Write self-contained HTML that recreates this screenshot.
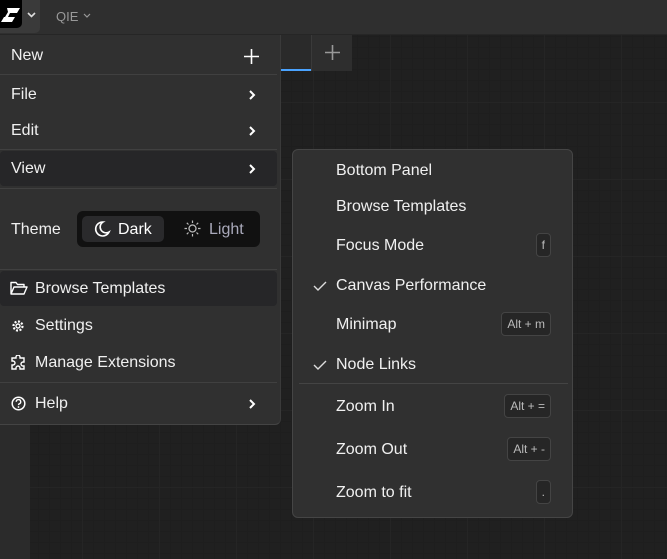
<!DOCTYPE html>
<html><head><meta charset="utf-8"><style>
*{box-sizing:border-box;margin:0;padding:0}
body{width:667px;height:559px;overflow:hidden;background:#202020;font-family:"Liberation Sans",sans-serif;position:relative;color:#e8e8e8}
.top{position:absolute;left:0;top:0;width:667px;height:35px;background:#2f2f2f;border-bottom:1px solid #262626}
.logobox{position:absolute;left:0;top:0;width:40px;height:33px;background:#3a3a3a;border-radius:0 0 5px 0}
.logo{position:absolute;left:0;top:0;width:22px;height:28px;background:#000;border-radius:0 0 5px 0}
.side{position:absolute;left:0;top:35px;width:30px;height:524px;background:#2b2b2b}
.canvas{position:absolute;left:30px;top:35px;right:0;bottom:0;
background-image:linear-gradient(#252525 1px,transparent 1px),linear-gradient(90deg,#252525 1px,transparent 1px),linear-gradient(#1e1e1e 1px,transparent 1px),linear-gradient(90deg,#1e1e1e 1px,transparent 1px);
background-size:77px 77px,77px 77px,11px 11px,11px 11px;background-position:-25px -10px}
.tab1{position:absolute;left:281px;top:35px;width:30px;height:36px;background:#2a2a2a;border-bottom:2px solid #4aa3ff}
.tab2{position:absolute;left:311px;top:35px;width:41px;height:36px;background:#2e2e2e;border-left:1px solid #3a3a3a}
.menu{position:absolute;left:0;top:35px;width:281px;height:390px;background:#303030;border-radius:0 0 6px 0;border-right:1px solid #3a3a3a;border-bottom:1px solid #444}
.row{position:absolute;left:0;width:277px;height:35px;font-size:16px;line-height:35px;padding-left:11px;color:#f0f0f0}
.hl{background:#262628;border-radius:4px}
.sep{position:absolute;left:0;width:277px;height:1px;background:#404040}
.chev{position:absolute;left:247px;top:12px;width:10px;height:12px}
.sub{position:absolute;left:292px;top:149px;width:281px;height:369px;background:#303030;border:1px solid #454545;border-radius:6px}
.srow{position:absolute;left:43px;font-size:16px;color:#f0f0f0;line-height:20px}
.kbd{position:absolute;right:21px;height:24px;border:1px solid #444;background:#262626;border-radius:4px;font-size:12px;color:#bbb;line-height:22px;padding:0 5px}
.chk{position:absolute;left:20px;width:14px;height:14px}
svg{display:block}
</style></head><body>
<div class="top">
 <div class="logobox"><div class="logo"><svg width="22" height="28" viewBox="0 0 22 28"><path d="M7 8h13l-3 5h-7l-2 4h7l-3 5H1l3-5h1l3-5z" fill="#fff"/></svg></div>
 <svg style="position:absolute;left:27px;top:12px" width="9" height="6" viewBox="0 0 9 6"><path d="M1 1l3.5 3.5L8 1" stroke="#ddd" stroke-width="1.6" fill="none"/></svg></div>
 <div style="position:absolute;left:56px;top:9px;font-size:13px;color:#999">QIE</div>
 <svg style="position:absolute;left:83px;top:13px" width="8" height="5" viewBox="0 0 8 5"><path d="M1 1l3 3 3-3" stroke="#999" stroke-width="1.2" fill="none"/></svg>
</div>
<div class="side"></div>
<div class="canvas"></div>
<div class="tab1"></div>
<div class="tab2"><svg style="position:absolute;left:12px;top:9px" width="17" height="17" viewBox="0 0 17 17"><path d="M8.5 1v15M1 8.5h15" stroke="#999" stroke-width="1.6"/></svg></div>

<div class="menu">
 <div class="row" style="top:3px">New<svg style="position:absolute;right:17px;top:10px" width="17" height="17" viewBox="0 0 17 17"><path d="M8.5 1v15M1 8.5h15" stroke="#fff" stroke-width="1.6"/></svg></div>
 <div class="sep" style="top:39px"></div>
 <div class="row" style="top:42px">File<svg class="chev" viewBox="0 0 10 12"><path d="M3 2l4 4-4 4" stroke="#fff" stroke-width="2" fill="none"/></svg></div>
 <div class="row" style="top:78px">Edit<svg class="chev" viewBox="0 0 10 12"><path d="M3 2l4 4-4 4" stroke="#fff" stroke-width="2" fill="none"/></svg></div>
 <div class="sep" style="top:114px"></div>
 <div class="row hl" style="top:116px">View<svg class="chev" viewBox="0 0 10 12"><path d="M3 2l4 4-4 4" stroke="#fff" stroke-width="2" fill="none"/></svg></div>
 <div class="sep" style="top:153px"></div>
 <div class="row" style="top:177px">Theme</div>
 <div style="position:absolute;left:77px;top:176px;width:183px;height:36px;background:#111;border-radius:6px">
  <div style="position:absolute;left:5px;top:5px;width:82px;height:26px;background:#2a2a2c;border-radius:5px"></div>
  <svg style="position:absolute;left:16px;top:9px" width="18" height="18" viewBox="0 0 18 18"><path d="M10 2a7 7 0 1 0 6 10A5.5 5.5 0 0 1 10 2z" stroke="#fff" stroke-width="1.6" fill="none"/></svg>
  <div style="position:absolute;left:41px;top:10px;font-size:16px;color:#fff">Dark</div>
  <svg style="position:absolute;left:107px;top:9px" width="17" height="17" viewBox="0 0 17 17"><circle cx="8.5" cy="8.5" r="3.5" stroke="#bbb" stroke-width="1.3" fill="none"/><path d="M8.5 0.5v2.5M8.5 14v2.5M0.5 8.5h2.5M14 8.5h2.5M2.8 2.8l1.7 1.7M12.5 12.5l1.7 1.7M2.8 14.2l1.7-1.7M12.5 4.5l1.7-1.7" stroke="#bbb" stroke-width="1.2"/></svg>
  <div style="position:absolute;left:132px;top:10px;font-size:16px;color:#aab">Light</div>
 </div>
 <div class="sep" style="top:234px"></div>
 <div class="row hl" style="top:236px;padding-left:35px">Browse Templates</div>
 <svg style="position:absolute;left:10px;top:246px" width="18" height="14" viewBox="0 0 18 14"><path d="M1 13V1.5h5l1.5 2H14v2.5M1 13l3-7h13l-3 7z" stroke="#fff" stroke-width="1.4" fill="none" stroke-linejoin="round"/></svg>
 <div class="row" style="top:273px;padding-left:35px">Settings</div>
 <svg style="position:absolute;left:11px;top:284px" width="14" height="14" viewBox="0 0 14 14"><circle cx="7" cy="7" r="2" stroke="#fff" stroke-width="1.4" fill="none"/><circle cx="7" cy="7" r="4.5" stroke="#fff" stroke-width="2.2" stroke-dasharray="2 1.5" fill="none"/></svg>
 <div class="row" style="top:310px;padding-left:35px">Manage Extensions</div>
 <svg style="position:absolute;left:11px;top:320px" width="15" height="15" viewBox="0 0 15 15"><path d="M5 2a2 2 0 0 1 4 0v1h4v4h-1a2 2 0 0 0 0 4h1v3H9v-1a2 2 0 0 0-4 0v1H1v-4h1a2 2 0 0 0 0-4H1V3h4z" stroke="#fff" stroke-width="1.4" fill="none"/></svg>
 <div class="sep" style="top:347px"></div>
 <div class="row" style="top:351px;padding-left:35px">Help<svg class="chev" viewBox="0 0 10 12"><path d="M3 2l4 4-4 4" stroke="#fff" stroke-width="2" fill="none"/></svg></div>
 <svg style="position:absolute;left:11px;top:361px" width="15" height="15" viewBox="0 0 15 15"><circle cx="7.5" cy="7.5" r="6.3" stroke="#fff" stroke-width="1.5" fill="none"/><path d="M5.3 5.8a2.2 2.2 0 1 1 3 2c-.6.3-.8.7-.8 1.3" stroke="#fff" stroke-width="1.4" fill="none"/><circle cx="7.5" cy="11" r=".9" fill="#fff"/></svg>
</div>

<div class="sub">
 <div class="srow" style="top:11px">Bottom Panel</div>
 <div class="srow" style="top:47px">Browse Templates</div>
 <div class="srow" style="top:86px">Focus Mode</div><div class="kbd" style="top:83px">f</div>
 <svg class="chk" style="top:129px" viewBox="0 0 14 14"><path d="M1 7l4 4 8-8" stroke="#ddd" stroke-width="1.4" fill="none"/></svg>
 <div class="srow" style="top:126px">Canvas Performance</div>
 <div class="srow" style="top:165px">Minimap</div><div class="kbd" style="top:162px">Alt + m</div>
 <svg class="chk" style="top:208px" viewBox="0 0 14 14"><path d="M1 7l4 4 8-8" stroke="#ddd" stroke-width="1.4" fill="none"/></svg>
 <div class="srow" style="top:205px">Node Links</div>
 <div style="position:absolute;left:6px;right:4px;top:233px;height:1px;background:#444"></div>
 <div class="srow" style="top:247px">Zoom In</div><div class="kbd" style="top:244px">Alt + =</div>
 <div class="srow" style="top:290px">Zoom Out</div><div class="kbd" style="top:287px">Alt + -</div>
 <div class="srow" style="top:333px">Zoom to fit</div><div class="kbd" style="top:330px">.</div>
</div>
</body></html>
